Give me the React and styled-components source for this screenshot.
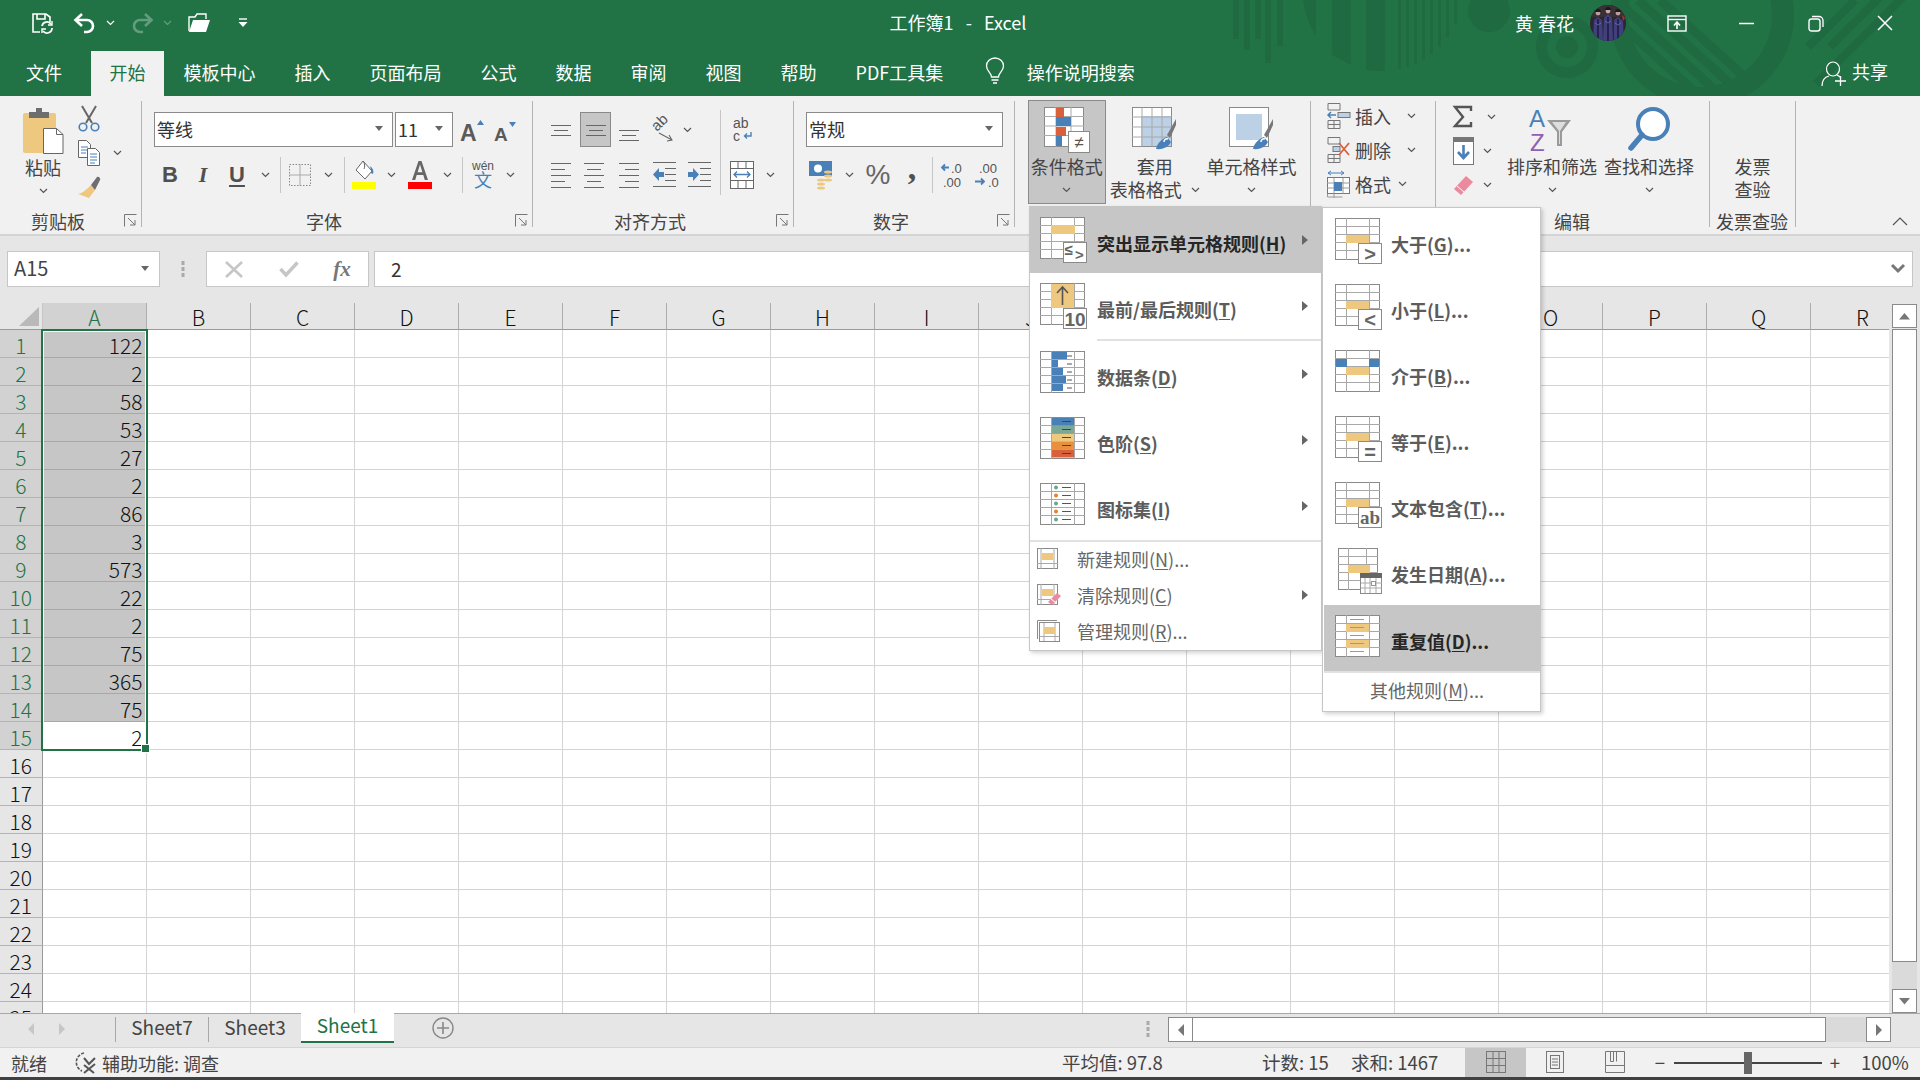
import React from 'react';
import styled, { createGlobalStyle } from 'styled-components';

const GREEN = '#217346';
const DARK = '#1f6a40';
const GRAY = '#666';
const BLUE = '#4a80b8';
const TAN = '#eec87e';
const LINE = '#8a8a8a';

const Global = createGlobalStyle`
  html, body { margin: 0; padding: 0; background: #fff; }
  * { box-sizing: border-box; }
  body { font-family: "Noto Sans CJK SC", "Noto Sans", sans-serif; overflow: hidden; }
  svg { display: block; overflow: visible; }
`;

const Frame = styled.div`
  position: relative; width: 1920px; height: 1080px; overflow: hidden;
  display: flex; flex-direction: column; background: #fff; color: #444; font-size: 18px;
`;
const Head = styled.header`
  position: relative; height: 96px; background: ${GREEN}; color: #fff; flex: none;
`;
const Pattern = styled.svg`
  position: absolute; left: 0; top: 0; pointer-events: none; overflow: hidden;
`;
const TitleBar = styled.div`
  position: relative; height: 51px; display: grid; grid-template-columns: 1fr auto 1fr; align-items: start;
`;
const Qat = styled.div`
  display: flex; align-items: center; padding-left: 32px; height: 46px;
`;
const QatCell = styled.div`
  width: ${p => p.$w}px; margin-left: ${p => p.$ml || 0}px; flex: none; display: flex; justify-content: center; align-items: center; opacity: ${p => p.$dim ? 0.3 : 1};
`;
const Title = styled.div`
  font-size: 18px; line-height: 45px; height: 46px; white-space: pre; word-spacing: 2px; margin-right: 4px;
`;
const WinSide = styled.div`
  display: flex; align-items: center; justify-content: flex-end; height: 46px;
`;
const UserName = styled.div`
  font-size: 18px; white-space: pre; margin-right: 16px; word-spacing: 1px; line-height: 1; margin-top: -1px;
`;
const WinBtn = styled.div`
  width: ${p => p.$w}px; margin-left: ${p => p.$ml || 0}px; display: flex; justify-content: center; align-items: center;
`;
const TabBar = styled.nav`
  position: relative; height: 45px; display: flex; align-items: stretch;
`;
const TabItem = styled.div`
  display: flex; align-items: center; white-space: nowrap; font-size: 18px; line-height: 1; padding: 0 ${p => p.$pad ?? 19.5}px 4px;
  ${p => p.$first && 'padding-left: 26px; padding-right: 29px;'}
  ${p => p.$active && `background: #f1f1f1; color: ${GREEN};`}
`;
const Share = styled.div`
  margin-left: auto; display: flex; align-items: center; gap: 5px; padding-right: 32px; font-size: 18px; padding-bottom: 6px;
`;
const ShareIcon = styled.div`
  padding-top: 6px;
`;
const Ribbon = styled.section`
  height: 140px; flex: none; display: flex; background: #f1f1f1; border-bottom: 2px solid #d4d4d4; color: #444;
`;
const Group = styled.div`
  width: ${p => p.$w}px; flex: none; display: flex; flex-direction: column; height: 138px;
`;
const GroupBody = styled.div`
  height: 111px; display: flex; padding-left: ${p => p.$pl || 0}px; padding-top: ${p => p.$pt ?? 11}px; align-items: flex-start;
`;
const GroupFoot = styled.div`
  height: 27px; display: flex; align-items: center; justify-content: space-between; padding-left: ${p => p.$pl}px; padding-right: 4px; font-size: 18px; line-height: 1;
`;
const Sep = styled.div`
  width: 1px; flex: none; background: #b4b4b4; margin: 5px 0 7px;
`;
const Stack = styled.div`
  display: flex; flex-direction: column;
`;
const CopyStack = styled(Stack)`
  width: 58px;
`;
const Collapse = styled(Stack)`
  justify-content: flex-end; padding: 0 12px 8px 0;
`;
const Row = styled.div`
  display: flex; align-items: center; height: ${p => p.$h || 45}px;
`;
const Cell = styled.div`
  width: ${p => p.$w}px; height: ${p => p.$h ? p.$h + 'px' : '100%'}; flex: none; display: flex; align-items: center; justify-content: center; margin-left: ${p => p.$ml || 0}px;
  ${p => p.$on && `background: #c6c6c6; border: 1px solid ${LINE};`}
`;
const Divider = styled.div`
  width: ${p => p.$w}px; flex: none; height: ${p => p.$h || 36}px; display: flex; justify-content: center; margin-top: ${p => p.$mt || 0}px;
  &::after { content: ''; width: 1px; background: #c6c6c6; height: 100%; }
`;
const Select = styled.div`
  width: ${p => p.$w}px; height: 35px; flex: none; background: #fff; border: 1px solid ${LINE}; display: flex; align-items: center; justify-content: space-between;
  padding: 0 9px 2px 2px; font-size: 18px; color: #333; margin-right: ${p => p.$mr || 0}px; line-height: 1;
`;
const Caret = styled.i`
  display: block; width: 0; height: 0; border-left: 4px solid transparent; border-right: 4px solid transparent; border-top: 5px solid #666;
`;
const Glyph = styled.span`
  font-family: "Liberation Sans", sans-serif; font-weight: 700; font-size: 22px; color: #505050; line-height: 1;
  ${p => p.$italic && 'font-style: italic; font-family: "Liberation Serif", serif;'}
  ${p => p.$under && 'text-decoration: underline; text-decoration-thickness: 2px; text-underline-offset: 3px;'}
`;
const CommaGlyph = styled.span`
  font-family: "Liberation Serif", serif; font-weight: 700; font-size: 34px; color: #505050; line-height: 34px; height: 34px; margin-bottom: 14px;
`;
const LightGlyph = styled.span`
  font-family: "Liberation Sans", sans-serif; font-size: ${p => p.$s}px; color: #666; line-height: 1;
`;
const BigBtn = styled.div`
  width: ${p => p.$w}px; flex: none; height: 104px; display: flex; flex-direction: column; align-items: center; padding-top: 7px; line-height: 23px; font-size: 18px;
  ${p => p.$on && `background: #c6c6c6; border: 1px solid ${LINE}; padding-top: 6px;`}
`;
const BigIcon = styled.div`
  height: 48px; flex: none; display: flex; align-items: flex-start; justify-content: center;
`;
const BigLine = styled.div`
  height: 23px; display: flex; align-items: center; gap: 9px; white-space: nowrap; line-height: 23px;
`;
const SmallRow = styled.div`
  height: 34px; display: flex; align-items: center; white-space: nowrap; line-height: 1;
`;
const FormulaBar = styled.div`
  height: 67px; flex: none; background: #e6e6e6; display: flex; align-items: flex-start; padding-top: 15px;
`;
const NameBox = styled.div`
  width: 153px; height: 36px; margin-left: 7px; background: #fff; border: 1px solid #c6c6c6; display: flex; align-items: center; justify-content: space-between; padding: 0 10px 2px 6px; font-size: 20px; color: #444; line-height: 1;
`;
const Dots = styled.div`
  width: ${p => p.$w}px; height: ${p => p.$h || 36}px; flex: none; display: flex; align-items: center; justify-content: center;
`;
const FxBox = styled.div`
  width: 163px; height: 36px; background: #fff; border: 1px solid #c6c6c6; display: flex; align-items: center;
`;
const FormulaInput = styled.div`
  width: 1539px; margin-left: 5px; height: 36px; background: #fff; border: 1px solid #c6c6c6; display: flex; align-items: center; justify-content: space-between; padding: 0 7px 2px 16px; font-size: 19px; color: #333; line-height: 1;
`;
const SheetArea = styled.div`
  height: 710px; flex: none; display: flex; background: #e6e6e6;
`;
const GridPane = styled.div`
  position: relative; width: 1889px; flex: none; overflow: hidden;
`;
const Grid = styled.div`
  display: grid; grid-template-columns: 42.5px repeat(18, 104px); grid-template-rows: 27px; grid-auto-rows: 28px;
  font-size: 21px; font-weight: 300; color: #111; line-height: 1;
`;
const Corner = styled.div`
  background: #e6e6e6; border-bottom: 1px solid #9a9a9a; border-right: 1px solid #c6c6c6; display: flex; justify-content: flex-end; align-items: flex-end; padding: 0 3px 3px 0;
`;
const ColHead = styled.div`
  background: ${p => p.$on ? '#d2d2d2' : '#e6e6e6'}; color: ${p => p.$on ? GREEN : '#111'};
  border-right: 1px solid #adadad; border-bottom: 1px solid #9a9a9a; display: flex; align-items: flex-end; justify-content: center; padding: 0 0 1px 1px;
`;
const RowHead = styled.div`
  background: ${p => p.$on ? '#d2d2d2' : '#e6e6e6'}; color: ${p => p.$on ? GREEN : '#111'};
  border-right: 1px solid #9a9a9a; border-bottom: 1px solid #b4b4b4; display: flex; align-items: flex-end; justify-content: center; padding-bottom: 1px;
`;
const GridCell = styled.div`
  background: ${p => p.$on ? '#c6c6c6' : '#fff'}; border-right: 1px solid #d4d4d4; border-bottom: 1px solid ${p => p.$on ? '#a8a8a8' : '#d4d4d4'};
  display: flex; align-items: flex-end; justify-content: flex-end; padding: 0 3px 1px 0; color: #111;
`;
const Selection = styled.div`
  position: absolute; left: 41px; top: 26px; width: 107px; height: 422px; border: 2px solid ${GREEN}; box-shadow: inset 0 0 0 1px #fff; pointer-events: none;
`;
const FillHandle = styled.div`
  position: absolute; right: -3px; bottom: -3px; width: 7px; height: 7px; background: ${GREEN}; outline: 1px solid #fff;
`;
const VScroll = styled.div`
  width: 31px; flex: none; padding: 1px 0 0 3px; display: flex; flex-direction: column;
`;
const ScrollBtn = styled.div`
  width: 25px; height: ${p => p.$h || 24}px; flex: none; background: #fff; border: 1px solid ${LINE}; display: flex; align-items: center; justify-content: center;
`;
const VThumb = styled.div`
  width: 25px; height: 633px; margin-top: 1px; flex: none; background: #fff; border: 1px solid ${LINE};
`;
const VTrack = styled.div`
  width: 25px; flex: 1; background: #dadada;
`;
const SheetBar = styled.div`
  height: 34px; flex: none; background: #e6e6e6; border-top: 1px solid #a8a8a8; display: flex; align-items: flex-start;
`;
const SheetNav = styled.div`
  width: 115px; height: 30px; flex: none; display: flex; align-items: center; padding-left: 28px; gap: 25px;
`;
const SheetTab = styled.div`
  width: ${p => p.$w}px; height: ${p => p.$on ? 30 : 25}px; flex: none; display: flex; align-items: center; justify-content: center; font-size: 19px; line-height: 1;
  ${p => p.$on ? `background: #fff; color: ${GREEN}; border-bottom: 2px solid ${GREEN}; margin-top: -1px; padding-bottom: 5px;` : 'border-left: 1px solid #a8a8a8; margin-top: 3px; padding-bottom: 7px;'}
`;
const AddSheet = styled.div`
  margin: 3px 0 0 38px; width: 22px; height: 22px;
`;
const HScroll = styled.div`
  margin: 3px 29px 0 0; width: 723px; height: 25px; display: flex; flex: none;
`;
const HBtn = styled.div`
  width: 25px; height: 25px; flex: none; background: #fff; border: 1px solid ${LINE}; display: flex; align-items: center; justify-content: center;
`;
const HThumb = styled.div`
  width: 633px; flex: none; background: #fff; border: 1px solid ${LINE}; border-left: none;
`;
const HTrack = styled.div`
  flex: 1; background: #dadada;
`;
const Grow = styled.div`
  flex: 1;
`;
const StatusBar = styled.footer`
  height: 33px; flex: none; background: #f1f1f1; border-top: 1px solid #d4d4d4; border-bottom: 3px solid #404040; display: flex; align-items: stretch; font-size: 18.5px; color: #444; line-height: 1;
`;
const StatusLeft = styled.div`
  width: 1062px; flex: none; display: flex; align-items: center; padding-left: 11px; font-size: 18px;
`;
const StatusItem = styled.div`
  width: ${p => p.$w}px; flex: none; display: flex; align-items: center; white-space: nowrap; padding-bottom: 1px; ${p => p.$ml && `margin-left: ${p.$ml}px;`}
  ${p => p.$c && 'justify-content: center;'}
  ${p => p.$on && 'background: #c6c6c6;'}
`;
const Slider = styled.div`
  position: relative; width: 148px; flex: none; align-self: center; height: 2px; background: #444;
`;
const SliderThumb = styled.div`
  position: absolute; left: 70px; top: -10px; width: 8px; height: 22px; background: #666;
`;
const Menu = styled.div`
  position: absolute; left: ${p => p.$x}px; top: ${p => p.$y}px; width: ${p => p.$w}px; background: #fff; border: 1px solid #c6c6c6; box-shadow: 2px 2px 4px rgba(0,0,0,.18);
  display: flex; flex-direction: column; padding-left: ${p => p.$pl || 0}px; z-index: ${p => p.$z || 2};
`;
const MenuItem = styled.div`
  height: 66px; flex: none; display: flex; align-items: center; padding-left: ${p => p.$pl ?? 10}px; font-weight: 700; font-size: 18px; color: ${p => p.$on ? '#262626' : '#5c5c5c'};
  ${p => p.$on && 'background: #c6c6c6;'} ${p => p.$mt && `margin-top: ${p.$mt}px;`}
`;
const MenuIcon = styled.div`
  width: ${p => p.$w || 57}px; flex: none;
`;
const MenuText = styled.div`
  flex: 1; padding-top: 6px; white-space: nowrap; line-height: 1;
`;
const Arrow = styled.i`
  display: block; width: 0; height: 0; margin: 0 13px 1px 0; border-top: 5.5px solid transparent; border-bottom: 5.5px solid transparent; border-left: 6px solid #666;
`;
const MenuSep = styled.div`
  height: 2px; flex: none; background: #e1e1e1; margin-left: ${p => p.$ml || 0}px; ${p => p.$mt && `margin-top: ${p.$mt}px;`}
`;
const SmallItem = styled.div`
  height: 36px; flex: none; display: flex; align-items: center; padding: 0 0 2px 7px; font-size: 18px; color: #666; line-height: 1;
`;
const SmallIcon = styled.div`
  width: 40px; flex: none;
`;
const MoreItem = styled.div`
  height: 38px; display: flex; align-items: center; justify-content: center; color: #666; font-size: 18px; line-height: 1; padding: 0 10px 4px 0;
`;
const Key = styled.span`
  text-decoration: underline; text-underline-offset: 2px; text-decoration-thickness: 1px;
`;

/* ---------- icons ---------- */
const Chev = ({ c = '#555' }) => (
  <svg width="9" height="6" viewBox="0 0 9 6"><path d="M1 1l3.5 3.5L8 1" fill="none" stroke={c} strokeWidth="1.2" /></svg>
);
const Launcher = () => (
  <svg width="13" height="13" viewBox="0 0 13 13"><path d="M.5 12.5V.5h12M4 4l7 7M11 6v5H6" fill="none" stroke="#777" strokeWidth="1" /></svg>
);
const Lines = ({ rows, w = 22, h = 24, c = GRAY }) => (
  <svg width={w} height={h} viewBox={`0 0 ${w} ${h}`}>
    {rows.map(([a, b, y], i) => <path key={i} d={`M${a} ${y + .5}H${b}`} stroke={c} strokeWidth="1" />)}
  </svg>
);
const ChartSave = () => (
  <svg width="22" height="22" viewBox="0 0 22 22">
    <path d="M8 20H1V2h13l4 3v5M5 2v5h8V2" fill="none" stroke="#fff" strokeWidth="1.6" />
    <path d="M10 14a5 5 0 0 1 9-2M20 16a5 5 0 0 1-9 3" fill="none" stroke="#fff" strokeWidth="1.8" />
    <path d="M20 9v4h-4M10 21v-4h4" fill="none" stroke="#fff" strokeWidth="1.4" />
  </svg>
);
const Undo = ({ flip }) => (
  <svg width="23" height="20" viewBox="0 0 23 20" style={flip ? { transform: 'scaleX(-1)' } : undefined}>
    <path d="M3 7h11a6 6 0 0 1 0 12h-3" fill="none" stroke="#fff" strokeWidth="2.6" />
    <path d="M9 1L2.5 7 9 13" fill="none" stroke="#fff" strokeWidth="2.6" />
  </svg>
);
const OpenFolder = () => (
  <svg width="23" height="20" viewBox="0 0 23 20">
    <path d="M1 18V4h6l2-3h9v5" fill="none" stroke="#fff" strokeWidth="1.4" />
    <path d="M1 19L5 7h17l-4 12z" fill="#fff" />
  </svg>
);
const Customize = () => (
  <svg width="10" height="10" viewBox="0 0 10 10"><path d="M1 1h8" stroke="#fff" strokeWidth="1.4" /><path d="M0.5 4h9L5 9z" fill="#fff" /></svg>
);
const Bulb = () => (
  <svg width="20" height="28" viewBox="0 0 20 28">
    <path d="M6.5 19c0-4-5-6-5-11a8.5 8 0 0 1 17 0c0 5-5 7-5 11z" fill="none" stroke="#fff" strokeWidth="1.3" />
    <path d="M6.5 22h7M8 25h4" stroke="#fff" strokeWidth="1.4" />
  </svg>
);
const UserPlus = () => (
  <svg width="26" height="26" viewBox="0 0 26 26">
    <ellipse cx="12" cy="8" rx="6.5" ry="7" fill="none" stroke="#fff" strokeWidth="1.2" />
    <path d="M1 25c0-6 3-9 7-10" fill="none" stroke="#fff" strokeWidth="1.2" />
    <path d="M14 20h11M19.5 15v10" stroke="#fff" strokeWidth="1.3" />
    <path d="M16 14c2 1 3 1.5 4 3" fill="none" stroke="#fff" strokeWidth="1.2" />
  </svg>
);
const Avatar = () => (
  <svg width="36" height="36" viewBox="0 0 36 36">
    <defs><clipPath id="av"><circle cx="18" cy="18" r="18" /></clipPath></defs>
    <g clipPath="url(#av)">
      <rect width="36" height="36" fill="#2a2732" />
      <rect x="0" y="0" width="36" height="12" fill="#3a3034" />
      <path d="M4 15l4-3 4 3 1 21H3zM14 13l4-4 4 4 1 23H13zM24 15l4-3 5 4 1 20H24z" fill="#413f7e" />
      <path d="M8 14v22M18 12v24M28 14v22" stroke="#1f1d40" strokeWidth="1.6" />
      <path d="M5 18l3 2 3-2M15 16l3 2 3-2M25 18l3 2 3-2" fill="none" stroke="#6f6cb0" strokeWidth=".8" />
      <circle cx="8" cy="8" r="2.4" fill="#b9a09c" /><circle cx="18" cy="6" r="2.4" fill="#c4aaa4" /><circle cx="28" cy="8" r="2.4" fill="#b9a09c" />
      <path d="M5 7c0-4 6-4 6 0zM15 5c0-4 6-4 6 0zM25 7c0-4 6-4 6 0z" fill="#1c1a20" />
      <path d="M32 10l3 3-2 3z" fill="#a83232" />
    </g>
  </svg>
);
const RibbonDisplay = () => (
  <svg width="20" height="17" viewBox="0 0 20 17">
    <rect x="1" y="1" width="18" height="15" fill="none" stroke="#fff" strokeWidth="1.4" />
    <path d="M1 4.5h18" stroke="#fff" strokeWidth="1.4" />
    <path d="M10 14V8M7 10.5L10 7l3 3.5" fill="none" stroke="#fff" strokeWidth="1.6" />
  </svg>
);
const WinMin = () => <svg width="15" height="3" viewBox="0 0 15 3"><path d="M0 1.5h15" stroke="#fff" strokeWidth="1.5" /></svg>;
const WinRestore = () => (
  <svg width="16" height="17" viewBox="0 0 16 17">
    <rect x="1" y="4" width="11" height="12" rx="2.5" fill="none" stroke="#fff" strokeWidth="1.4" />
    <path d="M4 1.5h7a4 4 0 0 1 4 4V12" fill="none" stroke="#fff" strokeWidth="1.3" />
  </svg>
);
const WinClose = () => <svg width="16" height="16" viewBox="0 0 16 16"><path d="M1 1l14 14M15 1L1 15" stroke="#fff" strokeWidth="1.5" /></svg>;

const PasteIcon = () => (
  <svg width="41" height="46" viewBox="0 0 41 46">
    <rect x="0" y="5" width="33" height="40" rx="2" fill={TAN} />
    <path d="M6 10V4h7V0h6v4h7v6z" fill="#6e6e6e" />
    <path d="M20.5 20.5h13l6.5 6v19H20.5z" fill="#fff" stroke="#666" />
    <path d="M33.5 20.5v6h6.5" fill="none" stroke="#666" />
  </svg>
);
const CutIcon = () => (
  <svg width="22" height="27" viewBox="0 0 22 27">
    <path d="M4 1l10 17M18 1L8 18" stroke="#666" strokeWidth="2" />
    <circle cx="5" cy="22" r="3.8" fill="none" stroke={BLUE} strokeWidth="1.6" />
    <circle cx="17" cy="22" r="3.8" fill="none" stroke={BLUE} strokeWidth="1.6" />
  </svg>
);
const CopyIcon = () => (
  <svg width="22" height="26" viewBox="0 0 22 26">
    <path d="M.5.5h8l4 4v13H.5z" fill="#fff" stroke="#666" />
    <path d="M3 7h7M3 10h7M3 13h5" stroke={BLUE} />
    <path d="M9.5 8.5h8l4 4v13h-12z" fill="#fff" stroke="#666" />
    <path d="M12 14h7M12 17h7M12 20h7M12 23h5" stroke={BLUE} />
  </svg>
);
const BrushIcon = () => (
  <svg width="24" height="26" viewBox="0 0 24 26">
    <path d="M14 10l4 5-6 8-11-4c5-1 9-5 13-9z" fill={TAN} />
    <path d="M14 10l6-8c1-1 4 1 3 3l-5 10z" fill="#6e6e6e" />
  </svg>
);
const FontSizeIcon = ({ grow }) => (
  <svg width="30" height="26" viewBox="0 0 30 26">
    <text x="5" y="24" fontFamily="Liberation Sans, sans-serif" fontWeight="700" fontSize={grow ? 23 : 19} fill="#5a5a5a">A</text>
    <path d={grow ? 'M22 8h7l-3.5-5z' : 'M20 5h7l-3.5 5z'} fill={BLUE} />
  </svg>
);
const BorderIcon = () => (
  <svg width="22" height="22" viewBox="0 0 22 22">
    <rect x=".5" y=".5" width="21" height="21" fill="none" stroke="#888" strokeDasharray="1.5 1.5" />
    <path d="M11 0v22M0 11h22" stroke="#aaa" />
  </svg>
);
const FillIcon = () => (
  <svg width="24" height="29" viewBox="0 0 24 29">
    <path d="M11 1l9 10-7 8-9-9z" fill="#fff" stroke="#666" />
    <path d="M11 1c2 2 2 6 1 8" fill="none" stroke="#666" />
    <path d="M18 6c3 2 4 5 3 8l-2-1c0-2 0-4-1-7z" fill={BLUE} />
    <rect y="22" width="24" height="7" fill="#ff0" />
  </svg>
);
const FontColorIcon = () => (
  <svg width="24" height="29" viewBox="0 0 24 29">
    <path d="M4 20L10.5 1h3L20 20h-3.2l-1.5-5H8.7l-1.5 5zM9.6 12.3h4.8L12 4.5z" fill="#666" />
    <rect y="22" width="24" height="7" fill="#f00" />
  </svg>
);
const WenIcon = () => (
  <svg width="22" height="30" viewBox="0 0 22 30">
    <text x="11" y="10" textAnchor="middle" fontFamily="Liberation Sans, sans-serif" fontSize="12" fill="#555">wén</text>
    <text x="11" y="27" textAnchor="middle" fontFamily="Noto Sans CJK SC, sans-serif" fontSize="18" fill={BLUE}>文</text>
  </svg>
);
const OrientIcon = () => (
  <svg width="24" height="24" viewBox="0 0 24 24">
    <text x="0" y="0" transform="translate(5 14) rotate(-45)" fontFamily="Liberation Sans, sans-serif" fontSize="15" fill="#555">ab</text>
    <path d="M7 15l13 7M17 17l3 5-5 1" fill="none" stroke="#666" strokeWidth="1.1" />
  </svg>
);
const WrapIcon = () => (
  <svg width="20" height="26" viewBox="0 0 20 26">
    <text x="0" y="11" fontFamily="Liberation Sans, sans-serif" fontSize="14" fill="#555">ab</text>
    <text x="0" y="24" fontFamily="Liberation Sans, sans-serif" fontSize="14" fill="#555">c</text>
    <path d="M18 15v4h-6M14 16.5L11.5 19l2.5 2.5" fill="none" stroke={BLUE} strokeWidth="1.4" />
  </svg>
);
const IndentIcon = ({ inc }) => (
  <svg width="23" height="25" viewBox="0 0 23 25">
    <path d="M0 .5h23M12 6.5h11M12 12.5h11M12 18.5h11M0 24.5h23" stroke="#666" />
    <path d={inc ? 'M0 10h5V6l6 6.5L5 19v-4H0z' : 'M11 10H6V6L0 12.5 6 19v-4h5z'} fill={BLUE} />
  </svg>
);
const MergeIcon = () => (
  <svg width="24" height="28" viewBox="0 0 24 28">
    <rect x=".5" y=".5" width="23" height="27" fill="#fff" stroke="#666" />
    <path d="M0 7.5h24M0 19.5h24M8 0v7M16 0v7M8 20v8M16 20v8" stroke="#666" />
    <path d="M4 13.5h16M7 10.5l-3 3 3 3M17 10.5l3 3-3 3" fill="none" stroke={BLUE} strokeWidth="1.3" />
  </svg>
);
const MoneyIcon = () => (
  <svg width="24" height="30" viewBox="0 0 24 30">
    <rect y="1" width="23" height="15" fill={BLUE} />
    <circle cx="9" cy="8.5" r="4" fill="#fff" />
    <ellipse cx="19" cy="12" rx="4" ry="1.5" fill={TAN} /><ellipse cx="19" cy="16" rx="4" ry="1.5" fill={TAN} /><ellipse cx="19" cy="20" rx="4" ry="1.5" fill={TAN} />
    <ellipse cx="12" cy="20" rx="4" ry="1.5" fill={TAN} /><ellipse cx="12" cy="24" rx="4" ry="1.5" fill={TAN} /><ellipse cx="12" cy="28" rx="4" ry="1.5" fill={TAN} />
  </svg>
);
const DecimalIcon = ({ inc }) => (
  <svg width="26" height="26" viewBox="0 0 26 26" fontFamily="Liberation Sans, sans-serif" fontSize="13" fill="#555">
    {inc ? (<>
      <text x="11" y="11">.0</text><text x="3" y="25">.00</text>
      <path d="M9 5.5H2M5 2.5l-3 3 3 3" fill="none" stroke={BLUE} strokeWidth="1.8" />
    </>) : (<>
      <text x="5" y="11">.00</text><text x="14" y="25">.0</text>
      <path d="M1 19.5h9M7 16.5l3 3-3 3" fill="none" stroke={BLUE} strokeWidth="1.8" />
    </>)}
  </svg>
);

const StyleBrush = () => (
  <g>
    <path d="M24 42c1-6 7-11 11-12l4 5c-2 4-7 8-15 7z" fill={BLUE} />
    <path d="M32 35a3 3 0 0 1 4-3" fill="none" stroke="#fff" strokeWidth="1.5" />
    <path d="M35 28l9-16v6l-6 13z" fill="#777" />
  </g>
);
const TableStyleIcon = () => (
  <svg width="46" height="44" viewBox="0 0 46 44">
    <rect x=".5" y=".5" width="39" height="39" fill="#fff" stroke={LINE} />
    <rect x="9" y="9" width="30" height="30" fill="#bcd0e6" />
    <path d="M10 .5v39M20 .5v39M30 .5v39M0 10h40M0 20h40M0 30h40" stroke="#aaa" />
    <StyleBrush />
  </svg>
);
const CellStyleIcon = () => (
  <svg width="46" height="44" viewBox="0 0 46 44">
    <rect x=".5" y=".5" width="39" height="39" fill="#fff" stroke={LINE} />
    <rect x="7" y="7" width="26" height="26" fill="#bcd0e6" />
    <StyleBrush />
  </svg>
);
const CondIcon = () => (
  <svg width="46" height="46" viewBox="0 0 46 46">
    <rect x=".5" y=".5" width="39" height="39" fill="#fff" stroke={LINE} />
    <path d="M12 0v40M27 0v40M0 9.5h40M0 19h40M0 28.5h40" stroke="#aaa" />
    <rect x="12" y="1" width="8" height="9" fill="#d9603b" />
    <rect x="12" y="10" width="15" height="9" fill={BLUE} />
    <rect x="12" y="20" width="10" height="9" fill="#d9603b" />
    <rect x="12" y="29" width="6" height="10" fill={BLUE} />
    <rect x="24.5" y="24.5" width="21" height="21" fill="#fff" stroke={LINE} />
    <text x="35" y="41" textAnchor="middle" fontFamily="Liberation Sans, sans-serif" fontSize="17" fill="#555">≠</text>
  </svg>
);
const InsertIcon = () => (
  <svg width="24" height="26" viewBox="0 0 24 26">
    <path d="M1 .5h12v6.5H1zM1 17.5h12v8H1zM1 21.5h12M7 17.5v8" fill="none" stroke="#777" />
    <rect x="11" y="9.5" width="12" height="5" fill="#bcd0e6" stroke="#777" />
    <path d="M9 12H1M4 9l-3 3 3 3" fill="none" stroke={BLUE} strokeWidth="1.5" />
  </svg>
);
const DeleteIcon = () => (
  <svg width="24" height="26" viewBox="0 0 24 26">
    <path d="M1 .5h12v6.5H1zM1 17.5h12v8H1zM1 21.5h12M7 17.5v8" fill="none" stroke="#777" />
    <rect x="6" y="9.5" width="7" height="5" fill="#bcd0e6" stroke="#777" />
    <path d="M12 6l10 12M22 6L12 18" stroke="#d9603b" strokeWidth="1.8" />
  </svg>
);
const FormatIcon = () => (
  <svg width="24" height="28" viewBox="0 0 24 28">
    <rect x=".5" y="7.5" width="22" height="16" fill="#fff" stroke="#777" />
    <path d="M0 13h23M0 18h23M7 8v20M16 8v16M.5 24v3h15" fill="none" stroke="#999" />
    <rect x="7" y="12" width="8" height="9" fill={BLUE} />
    <path d="M1 3h16M4 1L1 3l3 2M14 1l3 2-3 2" fill="none" stroke={BLUE} />
  </svg>
);
const SumIcon = () => (
  <svg width="20" height="22" viewBox="0 0 20 22"><path d="M18 5V1H2l8 10-8 9h16v-4" fill="none" stroke="#555" strokeWidth="2.4" /></svg>
);
const FillDownIcon = () => (
  <svg width="21" height="28" viewBox="0 0 21 28">
    <rect x=".5" y=".5" width="20" height="27" fill="#fff" stroke="#777" />
    <rect width="21" height="5" fill="#777" />
    <path d="M10.5 8v13M5 15l5.5 6 5.5-6" fill="none" stroke={BLUE} strokeWidth="2.6" />
  </svg>
);
const EraserIcon = ({ s = 22 }) => (
  <svg width={s} height={s} viewBox="0 0 22 22">
    <path d="M2 15L14 2l7 6L9 21z" fill="#e98a9e" />
    <path d="M5 12l7 6" stroke="#fff" strokeWidth="1" />
  </svg>
);
const SortIcon = () => (
  <svg width="46" height="48" viewBox="0 0 46 48" fontFamily="Liberation Sans, sans-serif" fontSize="24">
    <text x="0" y="20" fill={BLUE}>A</text>
    <text x="1" y="44" fill="#8f5fb5">Z</text>
    <path d="M18 13h24l-9 12v14h-5V25z" fill="#9a9a9a" />
    <path d="M23 15h14l-6 9v13h-1V24z" fill="#ddd" />
  </svg>
);
const FindIcon = () => (
  <svg width="42" height="44" viewBox="0 0 42 44">
    <circle cx="25" cy="17" r="15" fill="#fff" stroke={BLUE} strokeWidth="4" />
    <path d="M14 28L3 41" stroke={BLUE} strokeWidth="5.5" strokeLinecap="round" />
  </svg>
);
const Triangle = ({ dir = 'down', c = '#777', s = 9 }) => {
  const d = { down: `M0 0h${s}L${s / 2} ${s * .6}z`, up: `M0 ${s * .6}h${s}L${s / 2} 0z` }[dir];
  return <svg width={s} height={s * .6} viewBox={`0 0 ${s} ${s * .6}`}><path d={d} fill={c} /></svg>;
};
const Side = ({ dir, c = '#777', h = 12, w = 6 }) => (
  <svg width={w} height={h} viewBox={`0 0 ${w} ${h}`}><path d={dir === 'l' ? `M${w} 0v${h}L0 ${h / 2}z` : `M0 0v${h}L${w} ${h / 2}z`} fill={c} /></svg>
);
const NameDots = () => (
  <svg width="4" height="16" viewBox="0 0 4 16"><path d="M2 0v4M2 6v4M2 12v4" stroke="#aaa" strokeWidth="3" /></svg>
);
const XMark = () => <svg width="18" height="17" viewBox="0 0 18 17"><path d="M1 1l16 15M17 1L1 16" stroke="#c6c6c6" strokeWidth="2.6" /></svg>;
const CheckMark = () => <svg width="20" height="16" viewBox="0 0 20 16"><path d="M1.5 8l5.5 6L18.5 1.5" fill="none" stroke="#c6c6c6" strokeWidth="3.4" /></svg>;
const FxMark = styled.span`
  font-family: "Liberation Serif", serif; font-style: italic; font-weight: 700; font-size: 21px; color: #777; line-height: 1;
`;
const AddCircle = () => (
  <svg width="22" height="22" viewBox="0 0 22 22">
    <circle cx="11" cy="11" r="10" fill="none" stroke="#888" strokeWidth="1.4" />
    <path d="M11 5v12M5 11h12" stroke="#888" strokeWidth="1.6" />
  </svg>
);
const AccessIcon = () => (
  <svg width="21" height="22" viewBox="0 0 21 22">
    <path d="M9 1a9.5 9.5 0 0 0-2 18" fill="none" stroke="#555" strokeWidth="1.6" strokeDasharray="3 1.4" />
    <path d="M9 6l5 6 6-6M9 21l11-9M9 13l10 8" fill="none" stroke="#555" strokeWidth="2" />
  </svg>
);
const ViewNormal = () => (
  <svg width="20" height="22" viewBox="0 0 20 22"><rect x=".5" y=".5" width="19" height="21" fill="none" stroke="#777" /><path d="M7 0v22M13 0v22M0 7.5h20M0 14.5h20" stroke="#777" /></svg>
);
const ViewPage = () => (
  <svg width="18" height="22" viewBox="0 0 18 22"><rect x=".5" y=".5" width="17" height="21" fill="none" stroke="#777" /><rect x="4.5" y="4.5" width="9" height="13" fill="none" stroke="#777" /><path d="M6 8h6M6 11h6M6 14h6" stroke="#777" /></svg>
);
const ViewBreak = () => (
  <svg width="20" height="22" viewBox="0 0 20 22"><path d="M.5 14.5V.5h19v21H.5v-7h19M5.5 .5v10h3V.5M11.5 .5v10" fill="none" stroke="#777" /></svg>
);
const CollapseUp = () => (
  <svg width="16" height="9" viewBox="0 0 16 9"><path d="M1 8l7-7 7 7" fill="none" stroke="#555" strokeWidth="1.2" /></svg>
);

/* table family used in the conditional-format menu */
const Tbl = ({ children, over, w = 48, h = 46 }) => (
  <svg width={w} height={h} viewBox="0 0 48 46">
    <rect x=".5" y=".5" width="44" height="41" fill="#fff" stroke={LINE} />
    <path d="M11.5 0v42M34.5 0v42M0 8.5h45M0 16.5h45M0 24.5h45M0 32.5h45" stroke="#a8a8a8" />
    {children}
    {over}
  </svg>
);
const Over = ({ children, fs = 17, x = 35.5, y = 41, serif }) => (
  <g>
    <rect x="23.5" y="25.5" width="23" height="20" fill="#fff" stroke={LINE} />
    <text x={x} y={y} textAnchor="middle" fontFamily={serif ? 'Liberation Serif, serif' : 'Liberation Sans, sans-serif'} fontSize={fs} fill="#666">{children}</text>
  </g>
);
const LeOver = () => (
  <g fontFamily="Liberation Sans, sans-serif" fill="#666">
    <rect x="23.5" y="25.5" width="23" height="20" fill="#fff" stroke={LINE} />
    <text x="24.5" y="38" fontSize="15">≤</text>
    <text x="35" y="43" fontSize="15">&gt;</text>
  </g>
);

const IconHighlight = () => <Tbl over={<LeOver />}><rect x="11" y="8" width="24" height="9" fill={TAN} /></Tbl>;
const IconTop = () => (
  <Tbl over={<Over fs={19} x={35} y={42.5}>10</Over>}>
    <rect x="11" y="1" width="23" height="24" fill={TAN} />
    <path d="M22.5 22V4M17 10l5.5-6 5.5 6" fill="none" stroke="#555" strokeWidth="1.6" />
  </Tbl>
);
const IconBars = () => (
  <Tbl>
    {[[15, 1], [6, 9], [11, 17], [14, 25], [11, 33]].map(([w, y]) => <rect key={y} x="12" y={y} width={w} height="7" fill={BLUE} />)}
    <path d="M27 5h5M27 13h5M27 21h5M27 29h5M27 37h5" stroke="#555" />
  </Tbl>
);
const IconScale = () => (
  <Tbl>
    {[BLUE, '#7aa896', TAN, '#e8903f', '#d9603b'].map((c, i) => <rect key={c} x="12" y={1 + i * 8} width="22" height="7.5" fill={c} />)}
    <path d="M22 4.5h9M22 12.5h9M22 20.5h9M22 28.5h9M22 36.5h9" stroke="#444" />
  </Tbl>
);
const IconSets = () => (
  <Tbl>
    {[0, 1, 2, 3, 4].map(i => <circle key={i} cx="16" cy={4.5 + i * 8} r="2" fill={i % 2 ? '#e8802a' : '#6aa58c'} />)}
    <path d="M22 4.5h9M22 12.5h9M22 20.5h9M22 28.5h9M22 36.5h9" stroke="#555" />
  </Tbl>
);
const IconGt = ({ s }) => <Tbl over={<Over fs={20} x={35} y={42.5}>{s}</Over>}><rect x="11" y="17" width="23" height="8" fill={TAN} /></Tbl>;
const IconBetween = () => (
  <Tbl>
    <rect x="1" y="9" width="11" height="8" fill={BLUE} />
    <rect x="34" y="9" width="10" height="8" fill={BLUE} />
    <rect x="11" y="17" width="23" height="8" fill={TAN} />
  </Tbl>
);
const IconAb = () => (
  <Tbl over={<Over fs={19} x={35} y={42} serif>ab</Over>}>
    <rect x="11" y="17" width="23" height="8" fill={TAN} />
  </Tbl>
);
const IconDate = () => (
  <svg width="48" height="46" viewBox="0 0 48 46">
    <rect x="3.5" y=".5" width="39" height="41" fill="#fff" stroke={LINE} />
    <path d="M13.5 0v42M31.5 0v42M3 8.5h40M3 16.5h40M3 24.5h40M3 32.5h40" stroke="#a8a8a8" />
    <rect x="13" y="17" width="22" height="8" fill={TAN} />
    <rect x="25.5" y="25.5" width="21" height="20" fill="#fff" stroke={LINE} />
    <rect x="25" y="25" width="22" height="5" fill="#666" />
    <path d="M30 30v15M35 30v15M41 30v15M26 35h21M26 40h21" stroke="#aaa" />
    <rect x="36.5" y="33.5" width="4" height="4" fill="#fff" stroke="#e8802a" />
  </svg>
);
const IconDup = () => (
  <Tbl>
    <rect x="11" y="9" width="23" height="8" fill={TAN} />
    <rect x="11" y="25" width="23" height="8" fill={TAN} />
    <path d="M15 4.5h14M15 12.5h14M15 20.5h14M15 28.5h14M15 36.5h14" stroke="#999" />
  </Tbl>
);
const SmallTbl = ({ children }) => (
  <svg width="24" height="22" viewBox="0 0 24 22">
    <rect x=".5" y=".5" width="20" height="20" fill="#fff" stroke={LINE} />
    <path d="M4 0v21M17 0v21M0 15.5h21" stroke="#aaa" />
    <rect x="5" y="5" width="11" height="7" fill={TAN} />
    {children}
  </svg>
);
const IconNewRule = () => <SmallTbl />;
const IconClear = () => (
  <SmallTbl>
    <path d="M11 18l9-9 4 3-9 9z" fill="#e98a9e" />
    <path d="M14 15l4 3" stroke="#fff" />
  </SmallTbl>
);
const IconManage = () => (
  <svg width="24" height="22" viewBox="0 0 24 22">
    <path d="M.5 19V.5H20" fill="none" stroke={LINE} />
    <rect x="2.5" y="2.5" width="20" height="19" fill="#fff" stroke={LINE} />
    <path d="M7 3v18M18 3v18M3 16.5h19" stroke="#aaa" />
    <rect x="7" y="7" width="11" height="7" fill={TAN} />
  </svg>
);

const COLS = 'ABCDEFGHIJKLMNOPQR'.split('');
const VALUES = [122, 2, 58, 53, 27, 2, 86, 3, 573, 22, 2, 75, 365, 75, 2];
const ROW_NUMS = Array.from({ length: 25 }, (_, i) => i + 1);

const TABS = ['模板中心', '插入', '页面布局', '公式', '数据', '审阅', '视图', '帮助', 'PDF工具集'];

const MAIN_RULES = [
  ['突出显示单元格规则', 'H', IconHighlight, true],
  ['最前/最后规则', 'T', IconTop],
  null,
  ['数据条', 'D', IconBars],
  ['色阶', 'S', IconScale],
  ['图标集', 'I', IconSets],
];
const SUB_RULES = [
  ['大于', 'G', () => <IconGt s=">" />],
  ['小于', 'L', () => <IconGt s="<" />],
  ['介于', 'B', IconBetween],
  ['等于', 'E', () => <IconGt s="=" />],
  ['文本包含', 'T', IconAb],
  ['发生日期', 'A', IconDate],
  ['重复值', 'D', IconDup, true],
];

const ALIGN_TOP = [[0, 20, 2], [3, 17, 7], [0, 20, 12]];

export default function App() {
  return (
    <Frame>
      <Global />
      <Head>
        <Pattern width="1920" height="96" viewBox="0 0 1920 96">
          <defs>
            <clipPath id="inner"><circle cx="1700" cy="15" r="72" /></clipPath>
          </defs>
          <g fill={DARK}>
            {[[1233, 39], [1244, 50], [1255, 39], [1265, 63], [1277, 46]].map(([x, h]) => <rect key={x} x={x} y="0" width="6" height={h} />)}
            <path d="M1303 0c2 14 7 26 13 36V0z" />
            <path d="M1332 0h19v65l-19-10z" /><path d="M1366 0h19v71l-19-1z" />
            {[[1398, 69], [1406, 67], [1414, 64], [1422, 60], [1430, 54], [1438, 47], [1446, 37], [1454, 24]].map(([x, h]) => <rect key={x} x={x} y="0" width="3" height={h} />)}
            <circle cx="1489" cy="11" r="21" />
            <path d="M1567 16a31 31 0 1 0 .01 0zM1567 27a20 20 0 1 1-.01 0z" fillRule="evenodd" />
            <circle cx="1567" cy="47" r="11" />
            <circle cx="1702" cy="15" r="92" />
            <circle cx="1700" cy="15" r="72" fill={GREEN} />
          </g>
          <g clipPath="url(#inner)" stroke={DARK} strokeWidth="9">
            <path d="M1660 0l100 91M1638 0l100 91M1616 0l100 91M1594 0l100 91" />
          </g>
          <g stroke={DARK} strokeWidth="8">
            <path d="M1808 47l47-47M1830 47l50-50M1816 84l104-104" />
          </g>
        </Pattern>
        <TitleBar>
          <Qat>
            <QatCell $w={22}><ChartSave /></QatCell>
            <QatCell $w={23} $ml={19}><Undo /></QatCell>
            <QatCell $w={28}><Chev c="#fff" /></QatCell>
            <QatCell $w={22} $ml={7} $dim><Undo flip /></QatCell>
            <QatCell $w={28} $dim><Chev c="#fff" /></QatCell>
            <QatCell $w={22} $ml={7}><OpenFolder /></QatCell>
            <QatCell $w={66}><Customize /></QatCell>
          </Qat>
          <Title>工作簿1  -  Excel</Title>
          <WinSide>
            <UserName>黄 春花</UserName>
            <Avatar />
            <WinBtn $w={70} $ml={16}><RibbonDisplay /></WinBtn>
            <WinBtn $w={69}><WinMin /></WinBtn>
            <WinBtn $w={69}><WinRestore /></WinBtn>
            <WinBtn $w={70}><WinClose /></WinBtn>
          </WinSide>
        </TitleBar>
        <TabBar>
          <TabItem $first>文件</TabItem>
          <TabItem $active $pad={18.5}>开始</TabItem>
          {TABS.map(t => <TabItem key={t}>{t}</TabItem>)}
          <TabItem $pad={22}><Bulb /></TabItem>
          <TabItem $pad={0}>操作说明搜索</TabItem>
          <Share><ShareIcon><UserPlus /></ShareIcon>共享</Share>
        </TabBar>
      </Head>

      <Ribbon>
        <Group $w={141}>
          <GroupBody $pl={12} $pt={5}>
            <Stack>
              <BigBtn $w={62}>
                <BigIcon><PasteIcon /></BigIcon>
                <BigLine>粘贴</BigLine>
                <BigLine><Chev /></BigLine>
              </BigBtn>
            </Stack>
            <Stack>
              <Row $h={34}><Cell $w={30}><CutIcon /></Cell></Row>
              <Row $h={36}><Cell $w={30}><CopyIcon /></Cell><Cell $w={9} $ml={9}><Chev /></Cell></Row>
              <Row $h={34}><Cell $w={30}><BrushIcon /></Cell></Row>
            </Stack>
          </GroupBody>
          <GroupFoot $pl={31}><span>剪贴板</span><Launcher /></GroupFoot>
        </Group>
        <Sep />
        <Group $w={390}>
          <GroupBody $pl={12}>
            <Stack>
              <Row>
                <Select $w={238.5} $mr={2.5}>等线<Caret /></Select>
                <Select $w={57.5}>11<Caret /></Select>
                <Cell $w={34}><FontSizeIcon grow /></Cell>
                <Cell $w={34}><FontSizeIcon /></Cell>
              </Row>
              <Row>
                <Cell $w={32}><Glyph>B</Glyph></Cell>
                <Cell $w={34}><Glyph $italic>I</Glyph></Cell>
                <Cell $w={34}><Glyph $under>U</Glyph></Cell>
                <Cell $w={22}><Chev /></Cell>
                <Divider $w={8} />
                <Cell $w={32}><BorderIcon /></Cell>
                <Cell $w={24}><Chev /></Cell>
                <Divider $w={8} />
                <Cell $w={32}><FillIcon /></Cell>
                <Cell $w={22}><Chev /></Cell>
                <Cell $w={36}><FontColorIcon /></Cell>
                <Cell $w={18}><Chev /></Cell>
                <Divider $w={12} />
                <Cell $w={30}><WenIcon /></Cell>
                <Cell $w={24}><Chev /></Cell>
              </Row>
            </Stack>
          </GroupBody>
          <GroupFoot $pl={164}><span>字体</span><Launcher /></GroupFoot>
        </Group>
        <Sep />
        <Group $w={260}>
          <GroupBody $pl={12}>
            <Stack>
              <Row>
                <Cell $w={32}><Lines w={20} h={14} rows={ALIGN_TOP} /></Cell>
                <Cell $w={31} $h={35} $ml={3} $on><Lines w={20} h={14} rows={ALIGN_TOP} /></Cell>
                <Cell $w={35}><Lines w={20} h={24} rows={[[0, 20, 12], [3, 17, 17], [0, 20, 22]]} /></Cell>
                <Cell $w={36}><OrientIcon /></Cell>
                <Cell $w={10}><Chev /></Cell>
                <Cell $w={24} />
              </Row>
              <Row>
                <Cell $w={32}><Lines w={20} h={26} rows={[[0, 20, 1], [0, 14, 7], [0, 20, 13], [0, 14, 19], [0, 20, 25]]} /></Cell>
                <Cell $w={34}><Lines w={20} h={26} rows={[[0, 20, 1], [3, 17, 7], [0, 20, 13], [3, 17, 19], [0, 20, 25]]} /></Cell>
                <Cell $w={35}><Lines w={20} h={26} rows={[[0, 20, 1], [6, 20, 7], [0, 20, 13], [6, 20, 19], [0, 20, 25]]} /></Cell>
                <Cell $w={36}><IndentIcon /></Cell>
                <Cell $w={34}><IndentIcon inc /></Cell>
              </Row>
            </Stack>
            <Divider $w={8} $h={85} $mt={3} />
            <Stack>
              <Row><Cell $w={38}><WrapIcon /></Cell></Row>
              <Row><Cell $w={36}><MergeIcon /></Cell><Cell $w={20}><Chev /></Cell></Row>
            </Stack>
          </GroupBody>
          <GroupFoot $pl={81}><span>对齐方式</span><Launcher /></GroupFoot>
        </Group>
        <Sep />
        <Group $w={220}>
          <GroupBody $pl={12}>
            <Stack>
              <Row><Select $w={197}>常规<Caret /></Select></Row>
              <Row>
                <Cell $w={30}><MoneyIcon /></Cell>
                <Cell $w={26}><Chev /></Cell>
                <Cell $w={32}><LightGlyph $s={28}>%</LightGlyph></Cell>
                <Cell $w={36}><CommaGlyph>,</CommaGlyph></Cell>
                <Divider $w={5} />
                <Cell $w={36}><DecimalIcon inc /></Cell>
                <Cell $w={32}><DecimalIcon /></Cell>
              </Row>
            </Stack>
          </GroupBody>
          <GroupFoot $pl={79}><span>数字</span><Launcher /></GroupFoot>
        </Group>
        <Sep />
        <Group $w={295}>
          <GroupBody $pl={13} $pt={4}>
            <BigBtn $w={77.5} $on>
              <BigIcon><CondIcon /></BigIcon>
              <BigLine>条件格式</BigLine>
              <BigLine><Chev /></BigLine>
            </BigBtn>
            <BigBtn $w={98.5}>
              <BigIcon><TableStyleIcon /></BigIcon>
              <BigLine>套用</BigLine>
              <BigLine>表格格式<Chev /></BigLine>
            </BigBtn>
            <BigBtn $w={95}>
              <BigIcon><CellStyleIcon /></BigIcon>
              <BigLine>单元格样式</BigLine>
              <BigLine><Chev /></BigLine>
            </BigBtn>
          </GroupBody>
          <GroupFoot $pl={130}><span>样式</span></GroupFoot>
        </Group>
        <Sep />
        <Group $w={124}>
          <GroupBody $pl={15} $pt={3}>
            <Stack>
              <SmallRow><Cell $w={26}><InsertIcon /></Cell><Cell $w={3} />插入<Cell $w={10} $ml={15}><Chev /></Cell></SmallRow>
              <SmallRow><Cell $w={26}><DeleteIcon /></Cell><Cell $w={3} />删除<Cell $w={10} $ml={15}><Chev /></Cell></SmallRow>
              <SmallRow><Cell $w={26}><FormatIcon /></Cell><Cell $w={3} />格式<Cell $w={10} $ml={6}><Chev /></Cell></SmallRow>
            </Stack>
          </GroupBody>
          <GroupFoot $pl={35}><span>单元格</span></GroupFoot>
        </Group>
        <Sep />
        <Group $w={273}>
          <GroupBody $pl={13} $pt={4}>
            <CopyStack>
              <SmallRow><Cell $w={28}><SumIcon /></Cell><Cell $w={10} $ml={9}><Chev /></Cell></SmallRow>
              <SmallRow><Cell $w={28}><FillDownIcon /></Cell><Cell $w={10} $ml={5}><Chev /></Cell></SmallRow>
              <SmallRow><Cell $w={28}><EraserIcon /></Cell><Cell $w={10} $ml={5}><Chev /></Cell></SmallRow>
            </CopyStack>
            <BigBtn $w={90}>
              <BigIcon><SortIcon /></BigIcon>
              <BigLine>排序和筛选</BigLine>
              <BigLine><Chev /></BigLine>
            </BigBtn>
            <BigBtn $w={104}>
              <BigIcon><FindIcon /></BigIcon>
              <BigLine>查找和选择</BigLine>
              <BigLine><Chev /></BigLine>
            </BigBtn>
          </GroupBody>
          <GroupFoot $pl={118}><span>编辑</span></GroupFoot>
        </Group>
        <Sep />
        <Group $w={85}>
          <GroupBody $pt={4}>
            <BigBtn $w={85}>
              <BigIcon />
              <BigLine>发票</BigLine>
              <BigLine>查验</BigLine>
            </BigBtn>
          </GroupBody>
          <GroupFoot $pl={6}><span>发票查验</span></GroupFoot>
        </Group>
        <Sep />
        <Grow />
        <Collapse><CollapseUp /></Collapse>
      </Ribbon>

      <FormulaBar>
        <NameBox>A15<Caret /></NameBox>
        <Dots $w={46}><NameDots /></Dots>
        <FxBox>
          <Cell $w={54} $h={34}><XMark /></Cell>
          <Cell $w={55} $h={34}><CheckMark /></Cell>
          <Cell $w={52} $h={34}><FxMark>fx</FxMark></Cell>
        </FxBox>
        <FormulaInput>2<svg width="14" height="9" viewBox="0 0 14 9"><path d="M1 1l6 6 6-6" fill="none" stroke="#777" strokeWidth="3" /></svg></FormulaInput>
      </FormulaBar>

      <SheetArea>
        <GridPane>
          <Grid>
            <Corner><svg width="20" height="19" viewBox="0 0 20 19"><path d="M20 0v19H0z" fill="#b9b9b9" /></svg></Corner>
            {COLS.map((c, i) => <ColHead key={c} $on={i === 0}>{c}</ColHead>)}
            {ROW_NUMS.map(n => (
              <React.Fragment key={n}>
                <RowHead $on={n <= 15}>{n}</RowHead>
                {COLS.map((c, i) => (
                  <GridCell key={c} $on={i === 0 && n <= 14}>{i === 0 && n <= 15 ? VALUES[n - 1] : ''}</GridCell>
                ))}
              </React.Fragment>
            ))}
          </Grid>
          <Selection><FillHandle /></Selection>
        </GridPane>
        <VScroll>
          <ScrollBtn><Triangle dir="up" c="#777" s={11} /></ScrollBtn>
          <VThumb />
          <VTrack />
          <ScrollBtn $h={24}><Triangle c="#777" s={11} /></ScrollBtn>
        </VScroll>
      </SheetArea>

      <SheetBar>
        <SheetNav><Side dir="l" c="#c6c6c6" /><Side dir="r" c="#c6c6c6" /></SheetNav>
        <SheetTab $w={93}>Sheet7</SheetTab>
        <SheetTab $w={93}>Sheet3</SheetTab>
        <SheetTab $w={93} $on>Sheet1</SheetTab>
        <AddSheet><AddCircle /></AddSheet>
        <Grow />
        <Dots $w={40} $h={30}><NameDots /></Dots>
        <HScroll>
          <HBtn><Side dir="l" /></HBtn>
          <HThumb />
          <HTrack />
          <HBtn><Side dir="r" /></HBtn>
        </HScroll>
      </SheetBar>

      <StatusBar>
        <StatusLeft>
          就绪
          <Cell $w={30} $ml={23} $h={22}><AccessIcon /></Cell>
          <Cell $w={2} $h={22} />
          辅助功能: 调查
        </StatusLeft>
        <StatusItem $w={200}>平均值: 97.8</StatusItem>
        <StatusItem $w={89}>计数: 15</StatusItem>
        <StatusItem $w={114}>求和: 1467</StatusItem>
        <StatusItem $w={61} $c $on><ViewNormal /></StatusItem>
        <StatusItem $w={58} $c><ViewPage /></StatusItem>
        <StatusItem $w={62} $c><ViewBreak /></StatusItem>
        <StatusItem $w={28} $c>−</StatusItem>
        <Slider><SliderThumb /></Slider>
        <StatusItem $w={26} $c>+</StatusItem>
        <StatusItem $w={50} $ml={13}>100%</StatusItem>
      </StatusBar>

      <Menu $x={1029} $y={206} $w={293}>
        {MAIN_RULES.map((r, i) => {
          if (!r) return <MenuSep key={i} $ml={67} />;
          const [t, k, Icon, on] = r;
          return (
            <MenuItem key={t} $on={on}>
              <MenuIcon><Icon /></MenuIcon>
              <MenuText>{t}(<Key>{k}</Key>)</MenuText>
              <Arrow />
            </MenuItem>
          );
        })}
        <MenuSep $mt={1} />
        <SmallItem><SmallIcon><IconNewRule /></SmallIcon>新建规则(<Key>N</Key>)...</SmallItem>
        <SmallItem><SmallIcon><IconClear /></SmallIcon>清除规则(<Key>C</Key>)<Grow /><Arrow /></SmallItem>
        <SmallItem><SmallIcon><IconManage /></SmallIcon>管理规则(<Key>R</Key>)...</SmallItem>
      </Menu>
      <Menu $x={1322} $y={207} $w={219} $z={3} $pl={1}>
        {SUB_RULES.map(([t, k, Icon, on], i) => (
          <MenuItem key={t} $on={on} $pl={11} $mt={i === 6 ? 1 : 0}>
            <MenuIcon $w={56}><Icon /></MenuIcon>
            <MenuText>{t}(<Key>{k}</Key>)...</MenuText>
          </MenuItem>
        ))}
        <MenuSep />
        <MoreItem>其他规则(<Key>M</Key>)...</MoreItem>
      </Menu>
    </Frame>
  );
}
